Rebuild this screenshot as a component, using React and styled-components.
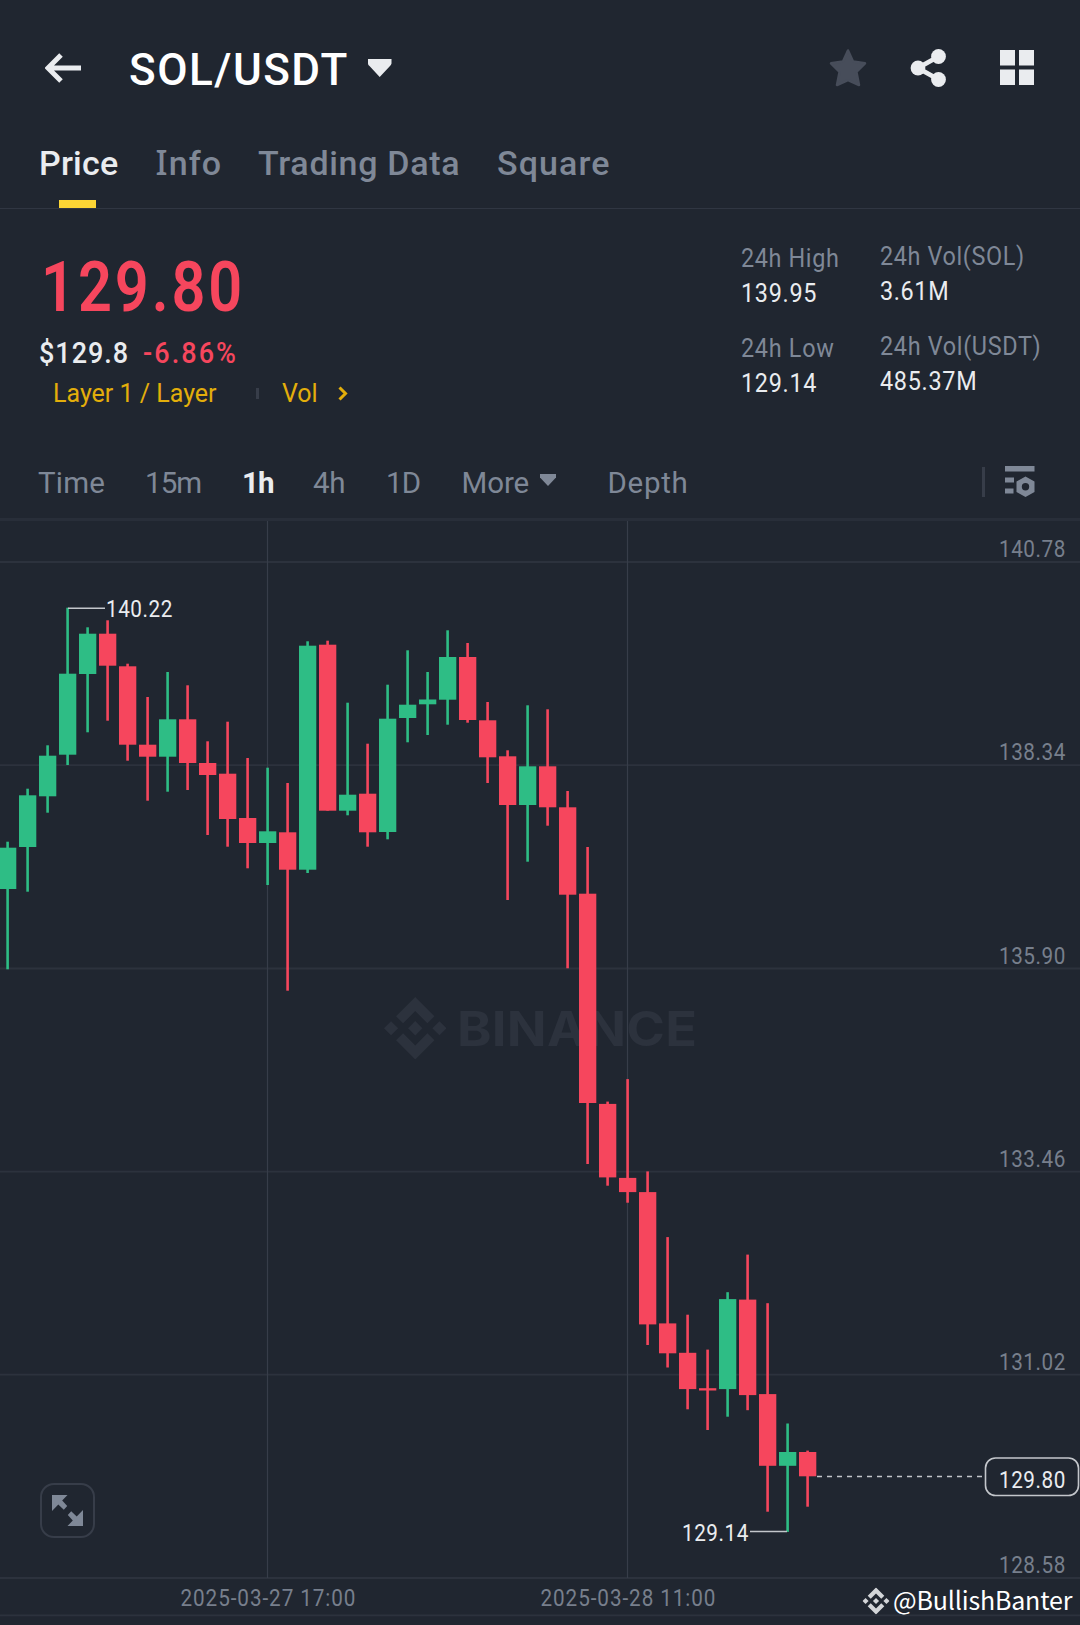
import React from "react";
import styled, { createGlobalStyle } from "styled-components";

const c = {
  bg: "#202630",
  line: "#2c323d",
  border: "#373d49",
  muted: "#7f8897",
  axis: "#777f8c",
  text: "#eaecef",
  up: "#2ebd85",
  down: "#f6465d",
  accent: "#fcd535",
  gold: "#e3ae0b",
};

const Global = createGlobalStyle`
  * { box-sizing: border-box; }
  body { margin: 0; background: ${c.bg}; }
`;

const Page = styled.div`
  width: 1080px;
  height: 1625px;
  overflow: hidden;
  background: ${c.bg};
  color: ${c.text};
  font-family: Roboto, "Liberation Sans", sans-serif;
  display: flex;
  flex-direction: column;
`;

const Header = styled.header`
  height: 137px;
  padding: 0 46px 2px 45px;
  display: flex;
  align-items: center;
  justify-content: space-between;
`;

const HeaderLeft = styled.div`
  display: flex;
  align-items: center;
`;

const Pair = styled.h1`
  margin: 4px 0 0 47px;
  width: 239px;
  font-size: 44px;
  line-height: 52px;
  font-weight: 500;
  letter-spacing: 1.5px;
  color: #fff;
`;

const Actions = styled.div`
  display: flex;
  align-items: center;
`;

const Icon = styled.svg`
  display: block;
  flex: none;
  margin-left: ${(p) => p.$ml || 0}px;
  margin-top: ${(p) => p.$mt || 0}px;
`;

const Tabs = styled.nav`
  height: 72px;
  padding-left: 39px;
  border-bottom: 1px solid #303642;
  display: grid;
  grid-template-columns: 116.5px 102.5px 239px 140px;
`;

const Tab = styled.div`
  position: relative;
  font-size: 34px;
  line-height: 52px;
  font-weight: 500;
  white-space: nowrap;
  letter-spacing: ${(p) => p.$ls || 0}px;
  color: ${(p) => (p.$active ? c.text : c.muted)};
  &::after {
    content: "";
    display: ${(p) => (p.$active ? "block" : "none")};
    position: absolute;
    left: 20px;
    bottom: 0;
    width: 37px;
    height: 8px;
    background: ${c.accent};
  }
`;

const SlabCapital = styled.span`
  font-family: "Noto Sans", Roboto, sans-serif;
  line-height: 1;
`;

const Summary = styled.section`
  height: 237px;
  padding-top: 1px;
  display: grid;
  grid-template-columns: 741px 138.5px auto;
`;

const Quote = styled.div`
  padding: 42px 0 0 39px;
`;

const Digits = styled.span`
  display: inline-block;
  transform: scaleX(${(p) => p.$sx || 0.9});
  transform-origin: 0 50%;
  letter-spacing: ${(p) => p.$ls || 0}px;
  white-space: nowrap;
`;

const LastPrice = styled.div`
  padding-left: 1.5px;
  font-size: 70px;
  line-height: 70px;
  font-weight: 600;
  color: ${c.down};
`;

const Change = styled.div`
  margin-top: 13px;
  display: grid;
  grid-template-columns: 104px auto;
  font-size: 30px;
  line-height: 36px;
  font-weight: 500;
`;

const Percent = styled.span`
  color: ${c.down};
`;

const Tags = styled.div`
  margin-top: 7px;
  padding-left: 14px;
  display: flex;
  align-items: center;
  font-size: 25px;
  line-height: 32px;
  color: ${c.gold};
`;

const TagName = styled.span`
  width: ${(p) => p.$w}px;
  white-space: nowrap;
`;

const TagDivider = styled.i`
  width: 3px;
  height: 11px;
  margin: -2px 23px 0 0;
  background: ${c.border};
`;

const StatColumn = styled.div`
  padding-top: ${(p) => p.$top}px;
  display: flex;
  flex-direction: column;
  gap: 20.6px;
`;

const Stat = styled.dl`
  margin: 0;
  font-size: 26px;
  line-height: 34.7px;
  white-space: nowrap;
`;

const StatLabel = styled.dt`
  color: ${c.muted};
`;

const StatValue = styled.dd`
  margin: 0;
`;

const Toolbar = styled.div`
  height: 75px;
  padding: 0 45px 0 38px;
  border-bottom: 3px solid #282e39;
  display: flex;
  align-items: center;
  justify-content: space-between;
`;

const Intervals = styled.div`
  padding-top: 1px;
  display: grid;
  grid-template-columns: 107px 97px 71px 73px 75.5px 146px 90px;
`;

const Interval = styled.div`
  display: flex;
  align-items: center;
  font-size: 29.5px;
  line-height: 40px;
  white-space: nowrap;
  letter-spacing: ${(p) => p.$ls || 0}px;
  font-weight: ${(p) => (p.$active ? 700 : 400)};
  color: ${(p) => (p.$active ? c.text : c.muted)};
`;

const ToolbarEnd = styled.div`
  display: flex;
  align-items: center;
  gap: 20px;
  padding-bottom: 1px;
  &::before {
    content: "";
    width: 3px;
    height: 30px;
    background: ${c.border};
  }
`;

const ChartArea = styled.svg`
  display: block;
  flex: none;
  font-family: Roboto, "Liberation Sans", sans-serif;
`;

const AxisText = styled.text`
  font-size: 23px;
  fill: ${(p) => p.$fill || c.axis};
`;

const BrandText = styled.text`
  font-family: Inter, "Open Sans", sans-serif;
  font-size: 47.5px;
  font-weight: 700;
  fill: ${c.line};
`;

const HandleText = styled.text`
  font-family: "Noto Sans CJK SC", "Noto Sans", sans-serif;
  font-size: 25px;
  font-weight: 400;
  fill: #fff;
`;

const TABS = [
  { name: "Price", ls: 0.2, active: true },
  { name: "Info", ls: 1.1, slab: true },
  { name: "Trading Data", ls: 0.7 },
  { name: "Square", ls: 1.1 },
];

const INTERVALS = [
  { name: "Time", ls: 0.2 },
  { name: "15m", ls: -0.9 },
  { name: "1h", ls: -0.9, active: true },
  { name: "4h", ls: -0.3 },
  { name: "1D", ls: -0.8 },
  { name: "More", ls: -0.1, caret: true },
  { name: "Depth", ls: 0.7 },
];

const STATS = [
  {
    top: 31,
    rows: [
      ["24h High", 0.7, "139.95", 0.8],
      ["24h Low", 0.8, "129.14", 0.8],
    ],
  },
  {
    top: 29,
    rows: [
      ["24h Vol(SOL)", 0.7, "3.61M", 0.7],
      ["24h Vol(USDT)", 0.75, "485.37M", 0.8],
    ],
  },
];

// [rising, high, body top, body bottom, low], one candle per hour
const CANDLES = [
  [1, 841.7, 847.7, 889, 969.3],
  [1, 788.7, 795.3, 847, 891.7],
  [1, 745.3, 755.7, 796.3, 812.7],
  [1, 607.7, 673.7, 754.7, 765],
  [1, 627.3, 633.7, 674, 732.3],
  [0, 620.3, 633.7, 665.7, 720.7],
  [0, 663.7, 666.3, 744.7, 760.7],
  [0, 697, 744.7, 756.7, 800.7],
  [1, 672, 719.3, 756.7, 791.7],
  [0, 685.3, 719.3, 763, 790],
  [0, 741.3, 763, 775, 835],
  [0, 721.7, 773.7, 819, 846.7],
  [0, 758, 818, 843, 868.3],
  [1, 767.7, 831.3, 843, 885],
  [0, 783, 832.3, 869.7, 990.7],
  [1, 641.3, 645.7, 869.7, 873],
  [0, 640.7, 644.7, 810.7, 810.7],
  [1, 702.7, 794.7, 810.7, 815.3],
  [0, 743.7, 793.7, 832.3, 846.7],
  [1, 684.7, 718.7, 832, 839.3],
  [1, 650.3, 704.7, 718, 742.3],
  [1, 672, 699.5, 704.3, 735],
  [1, 630.3, 657, 699.7, 724.7],
  [0, 643, 657, 720, 722.7],
  [0, 702, 720.3, 757.3, 783],
  [0, 750.3, 756.3, 805, 900],
  [1, 705.3, 766.3, 805, 861.7],
  [0, 709.3, 766.3, 807.3, 825.7],
  [0, 791, 807.3, 894.7, 968.3],
  [0, 847, 893.7, 1103, 1164],
  [0, 1101.6, 1103.9, 1177.4, 1185.7],
  [0, 1079.1, 1177.9, 1192.1, 1202.7],
  [0, 1171.4, 1192.1, 1324.4, 1345],
  [0, 1237.1, 1323.4, 1353.3, 1367.5],
  [0, 1314.7, 1352.8, 1389.1, 1409.3],
  [0, 1349.6, 1388.2, 1390.5, 1430],
  [1, 1292.2, 1299.1, 1389.1, 1416.7],
  [0, 1254.6, 1299.6, 1395.1, 1410.2],
  [0, 1303.2, 1394.1, 1465.8, 1511.7],
  [1, 1423.5, 1452, 1465.8, 1531.9],
  [0, 1450.6, 1452, 1476.3, 1506.7],
];

const LEVELS = [
  ["140.78", 562],
  ["138.34", 765.2],
  ["135.90", 968.5],
  ["133.46", 1171.7],
  ["131.02", 1374.7],
  ["128.58", 1578],
];

const Label = ({ x, y, width, fill, children }) => (
  <AxisText $fill={fill} transform={`translate(${x} ${y}) scale(0.9 1)`} textLength={width / 0.9}>
    {children}
  </AxisText>
);

const Candle = ({ index, data: [up, high, top, bottom, low] }) => {
  const x = 7.6 + index * 20;
  return (
    <g fill={up ? c.up : c.down}>
      <rect x={x - 1.3} y={high} width="2.6" height={low - high} />
      <rect x={x - 8.6} y={top} width="17.3" height={bottom - top} />
    </g>
  );
};

const BinanceMark = ({ x, y, size, fill }) => (
  <svg x={x} y={y} width={size} height={size} viewBox="0 0 126.6 126.6" fill={fill}>
    <path d="M38.7 53.2 63.3 28.6 87.9 53.2 102.2 38.9 63.3 0 24.4 38.9z" />
    <path d="M0 63.3 14.3 49 28.6 63.3 14.3 77.6z" />
    <path d="M38.7 73.4 63.3 98 87.9 73.4 102.2 87.7 63.3 126.6 24.4 87.7z" />
    <path d="M98 63.3 112.3 49 126.6 63.3 112.3 77.6z" />
    <path d="M77.8 63.3 63.3 48.8 48.8 63.3 63.3 77.8z" />
  </svg>
);

const Chart = () => (
  <ChartArea width="1080" height="1104" viewBox="0 521 1080 1104">
    <BinanceMark x={384} y={997} size={62.5} fill={c.line} />
    <BrandText transform="translate(457 1046) scale(1.100 1)" textLength={240 / 1.1}>BINANCE</BrandText>
    <g stroke={c.line} strokeWidth="1.8">
      {LEVELS.map(([label, y]) => (
        <line key={label} x1="0" x2="1080" y1={y} y2={y} />
      ))}
      <line x1="0" x2="1080" y1="1615.3" y2="1615.3" />
    </g>
    <g stroke={c.border} strokeWidth="1.2">
      <line x1="267.5" x2="267.5" y1="521" y2="1578" />
      <line x1="627.5" x2="627.5" y1="521" y2="1578" />
    </g>
    {CANDLES.map((d, i) => (
      <Candle key={i} index={i} data={d} />
    ))}
    {LEVELS.map(([label, y]) => (
      <Label key={label} x={999} y={y - 5} width={66.3}>{label}</Label>
    ))}
    <g stroke="#c3c6cb" strokeWidth="1.5">
      <line x1="68" x2="105" y1="608.3" y2="608.3" />
      <line x1="750" x2="787" y1="1531.6" y2="1531.6" />
      <line x1="817" x2="984" y1="1476.5" y2="1476.5" strokeDasharray="5 5" />
    </g>
    <Label fill={c.text} x={106} y={617} width={66.3}>140.22</Label>
    <Label fill={c.text} x={682} y={1541} width={66.3}>129.14</Label>
    <rect x="985.5" y="1458" width="93" height="37.5" rx="10" fill={c.bg} stroke="#c3c6cb" strokeWidth="1.6" />
    <Label fill={c.text} x={999} y={1487.7} width={66.3}>129.80</Label>
    <Label x={180.5} y={1605.8} width={175}>2025-03-27 17:00</Label>
    <Label x={540.5} y={1605.8} width={175}>2025-03-28 11:00</Label>
    <rect x="41" y="1484" width="53" height="53" rx="13" fill="none" stroke={c.border} strokeWidth="2" />
    <path
      fill={c.muted}
      d="M52 1495H67.5L62.2 1500.6 67.2 1506 63.8 1509.8 58.3 1504.5 52 1511ZM83 1526H67.5L72.8 1520.4 67.8 1515 71.2 1511.2 76.7 1516.5 83 1510Z"
    />
    <BinanceMark x={862.5} y={1587.5} size={27} fill="#d3d5d8" />
    <HandleText x="893" y="1610.300" textLength="179.500">@BullishBanter</HandleText>
  </ChartArea>
);

export default function App() {
  return (
    <Page>
      <Global />
      <Header>
        <HeaderLeft>
          <Icon width="37" height="30" viewBox="0 0 37 30">
            <path d="M36 15H3M16 2 3 15 16 28" fill="none" stroke={c.text} strokeWidth="5" />
          </Icon>
          <Pair>SOL/USDT</Pair>
          <Icon width="24" height="18" viewBox="0 0 24 18">
            <path d="M0 0H23.500V4.500Q23 6 22 7L11.700 18 1.500 7Q0 6 0 4.500Z" fill={c.text} />
          </Icon>
        </HeaderLeft>
        <Actions>
          <Icon width="38" height="40" viewBox="0 0 38 40">
            <path
              d="M19 2.500 24 13.500 36 15.300 27.400 23.800 30 37 19 32.200 8 37 10.600 23.800 2 15.300 14 13.500Z"
              fill="#474d5a"
              stroke="#474d5a"
              strokeWidth="2.500"
              strokeLinejoin="round"
            />
          </Icon>
          <Icon width="37" height="40" viewBox="0 0 37 40" $ml={43}>
            <path d="M28.500 8.500 8 20 28.500 31.500" fill="none" stroke={c.text} strokeWidth="4.800" />
            <g fill={c.text}>
              <circle cx="28.500" cy="8.500" r="7.400" />
              <circle cx="8" cy="20" r="7.400" />
              <circle cx="28.500" cy="31.500" r="7.400" />
            </g>
          </Icon>
          <Icon width="34" height="35" viewBox="0 0 34 35" $ml={53}>
            <path d="M0 0h15v15.500H0zM19 0h15v15.500H19zM0 19.500h15V35H0zM19 19.500h15V35H19z" fill={c.text} />
          </Icon>
        </Actions>
      </Header>
      <Tabs>
        {TABS.map((t) => (
          <Tab key={t.name} $ls={t.ls} $active={t.active}>
            {t.slab ? (
              <>
                <SlabCapital>{t.name[0]}</SlabCapital>
                {t.name.slice(1)}
              </>
            ) : (
              t.name
            )}
          </Tab>
        ))}
      </Tabs>
      <Summary>
        <Quote>
          <LastPrice>
            <Digits $sx={0.85} $ls={3.4}>129.80</Digits>
          </LastPrice>
          <Change>
            <Digits $ls={1.1}>$129.8</Digits>
            <Percent>
              <Digits $ls={2.3}>-6.86%</Digits>
            </Percent>
          </Change>
          <Tags>
            <TagName $w={203}>Layer 1 / Layer</TagName>
            <TagDivider />
            <TagName $w={56}>Vol</TagName>
            <Icon width="10" height="15" viewBox="0 0 10 15" $mt={-2}>
              <path d="M1.500 1.500 7.500 7.500 1.500 13.500" fill="none" stroke={c.gold} strokeWidth="3" />
            </Icon>
          </Tags>
        </Quote>
        {STATS.map((col) => (
          <StatColumn key={col.top} $top={col.top}>
            {col.rows.map(([label, ls, value, vls]) => (
              <Stat key={label}>
                <StatLabel>
                  <Digits $ls={ls}>{label}</Digits>
                </StatLabel>
                <StatValue>
                  <Digits $ls={vls}>{value}</Digits>
                </StatValue>
              </Stat>
            ))}
          </StatColumn>
        ))}
      </Summary>
      <Toolbar>
        <Intervals>
          {INTERVALS.map((t) => (
            <Interval key={t.name} $ls={t.ls} $active={t.active}>
              {t.name}
              {t.caret && (
                <Icon width="16" height="12" viewBox="0 0 16 12" $ml={11} $mt={-5}>
                  <path d="M0 0H16V3.500L8 12 0 3.500Z" fill={c.muted} />
                </Icon>
              )}
            </Interval>
          ))}
        </Intervals>
        <ToolbarEnd>
          <Icon width="30" height="31" viewBox="0 0 30 31">
            <path
              fill={c.muted}
              fillRule="evenodd"
              d="M0 0H29.500V5.500H0ZM0 11.500H9V16.500H0ZM0 22.500H8.500V27.500H0ZM20.500 10.500 29.500 15.500V26L20.500 31 11.500 26V15.500ZM20.500 17A3.700 3.700 0 1 0 20.500 24.400 3.700 3.700 0 1 0 20.500 17Z"
            />
          </Icon>
        </ToolbarEnd>
      </Toolbar>
      <Chart />
    </Page>
  );
}
